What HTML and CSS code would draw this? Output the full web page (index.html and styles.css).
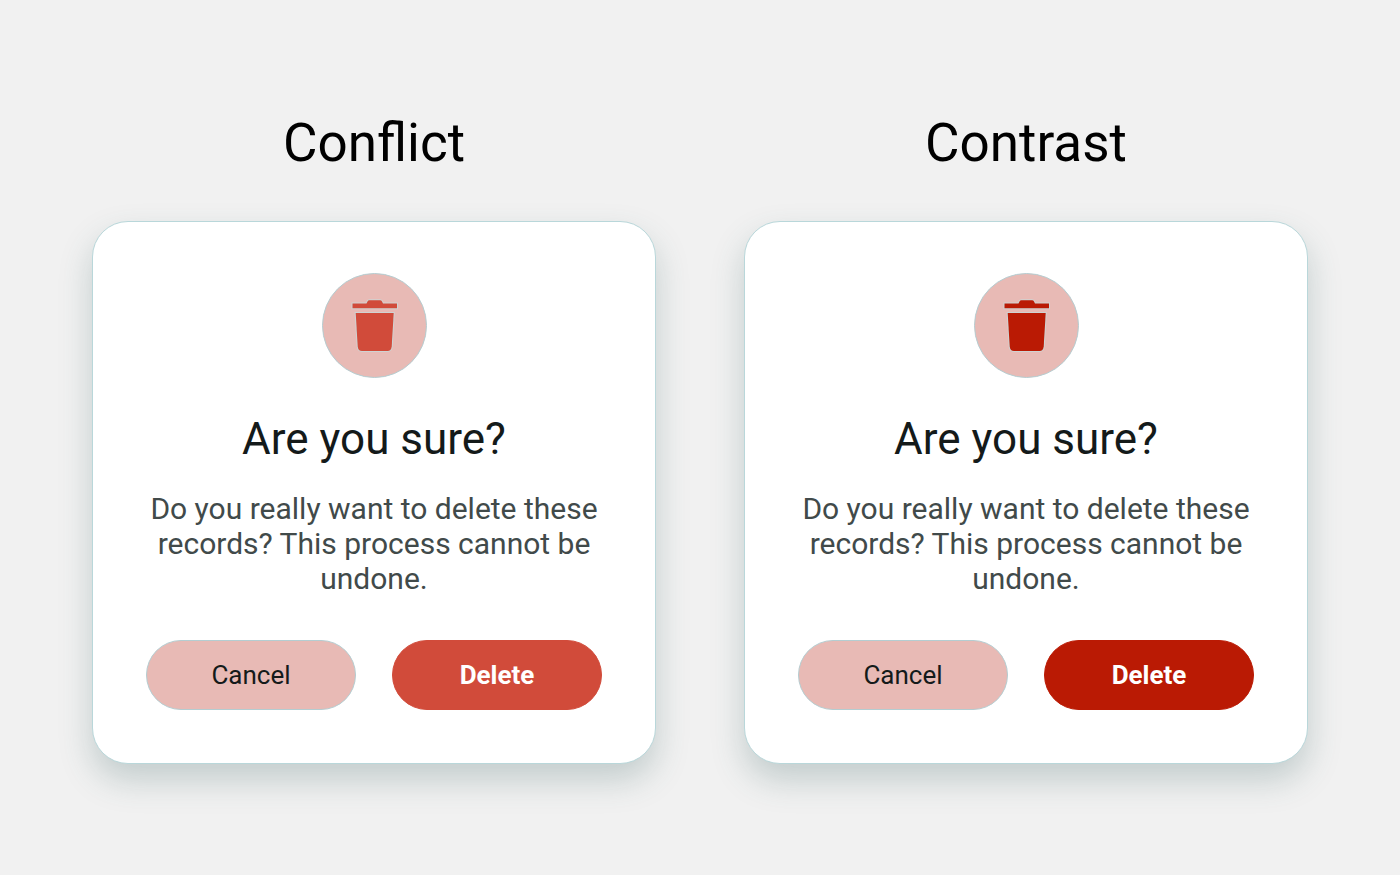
FILE: index.html
```html
<!DOCTYPE html>
<html lang="en">
<head>
    <meta charset="UTF-8">
    <meta name="viewport" content="width=device-width, initial-scale=1.0">
    <title>Conflict vs Contrast</title>
    <link rel="stylesheet" href="styles.css">
</head>
<body>
    <main class="comparison">
        <section class="example conflict">
            <h1>Conflict</h1>
            <div class="card">
                <div class="icon">
                    <svg viewBox="0 0 47 53" aria-hidden="true">
                        <path d="M1.500 4.500H15.500L16.500 2.500Q17 1.300 18.500 1.300H29Q30.500 1.300 31 2.500L32 4.500H46V9.200H1.500Z"/>
                        <path d="M4.700 14H42.700L40.700 47.500Q40.200 52 36.500 52H11Q7.200 52 6.700 47.500Z"/>
                    </svg>
                </div>
                <h2>Are you sure?</h2>
                <p>Do you really want to delete these records? This process cannot be undone.</p>
                <div class="buttons">
                    <button type="button" class="cancel">Cancel</button>
                    <button type="button" class="delete">Delete</button>
                </div>
            </div>
        </section>

        <section class="example contrast">
            <h1>Contrast</h1>
            <div class="card">
                <div class="icon">
                    <svg viewBox="0 0 47 53" aria-hidden="true">
                        <path d="M1.500 4.500H15.500L16.500 2.500Q17 1.300 18.500 1.300H29Q30.500 1.300 31 2.500L32 4.500H46V9.200H1.500Z"/>
                        <path d="M4.700 14H42.700L40.700 47.500Q40.200 52 36.500 52H11Q7.200 52 6.700 47.500Z"/>
                    </svg>
                </div>
                <h2>Are you sure?</h2>
                <p>Do you really want to delete these records? This process cannot be undone.</p>
                <div class="buttons">
                    <button type="button" class="cancel">Cancel</button>
                    <button type="button" class="delete">Delete</button>
                </div>
            </div>
        </section>
    </main>
</body>
</html>
```
FILE: styles.css
```css
* {
    box-sizing: border-box;
}
body {
    margin: 0;
    background-color: #f1f1f1;
    font-family: Roboto, Arial, sans-serif;
    text-align: center;
}
.comparison {
    display: grid;
    grid-template-columns: 1fr 1fr;
    gap: 88px;
    padding: 113px 92px 80px;
}
.conflict {
    --danger: #d14b3a;
}
.contrast {
    --danger: #ba1a04;
}
h1, h2, p {
    margin: 0;
    font-weight: 400;
}
h1 {
    margin-bottom: 48px;
    color: #000;
    font-size: 53px;
    line-height: 60px;
}
.card {
    padding: 51px 53px 53px;
    border: 1px solid #b9d7da;
    border-radius: 36px;
    background-color: #fff;
    box-shadow: 0 16px 32px rgba(60, 100, 100, 0.25);
}
.icon {
    display: flex;
    justify-content: center;
    align-items: center;
    width: 105px;
    height: 105px;
    margin: 0 auto 35px;
    border: 1px solid #b4cdd1;
    border-radius: 50%;
    background-color: #e8bab5;
}
.icon svg {
    width: 47px;
    height: 53px;
    overflow: visible;
    fill: var(--danger);
    stroke: #cfd3d2;
    stroke-width: 2px;
    paint-order: stroke;
}
h2 {
    margin-bottom: 26px;
    color: #141a1a;
    font-size: 44px;
    line-height: 52px;
}
p {
    margin-bottom: 44px;
    color: #414a4a;
    font-size: 30px;
    line-height: 35px;
}
.buttons {
    display: grid;
    grid-template-columns: 1fr 1fr;
    gap: 36px;
}
button {
    height: 70px;
    padding: 0;
    border: 1px solid #b4cdd1;
    border-radius: 35px;
    font-family: inherit;
    font-size: 26px;
    cursor: pointer;
}
.cancel {
    background-color: #e8bab5;
    color: #141a1a;
}
.delete {
    border-color: var(--danger);
    background-color: var(--danger);
    color: #fff;
    font-weight: 700;
}
```
